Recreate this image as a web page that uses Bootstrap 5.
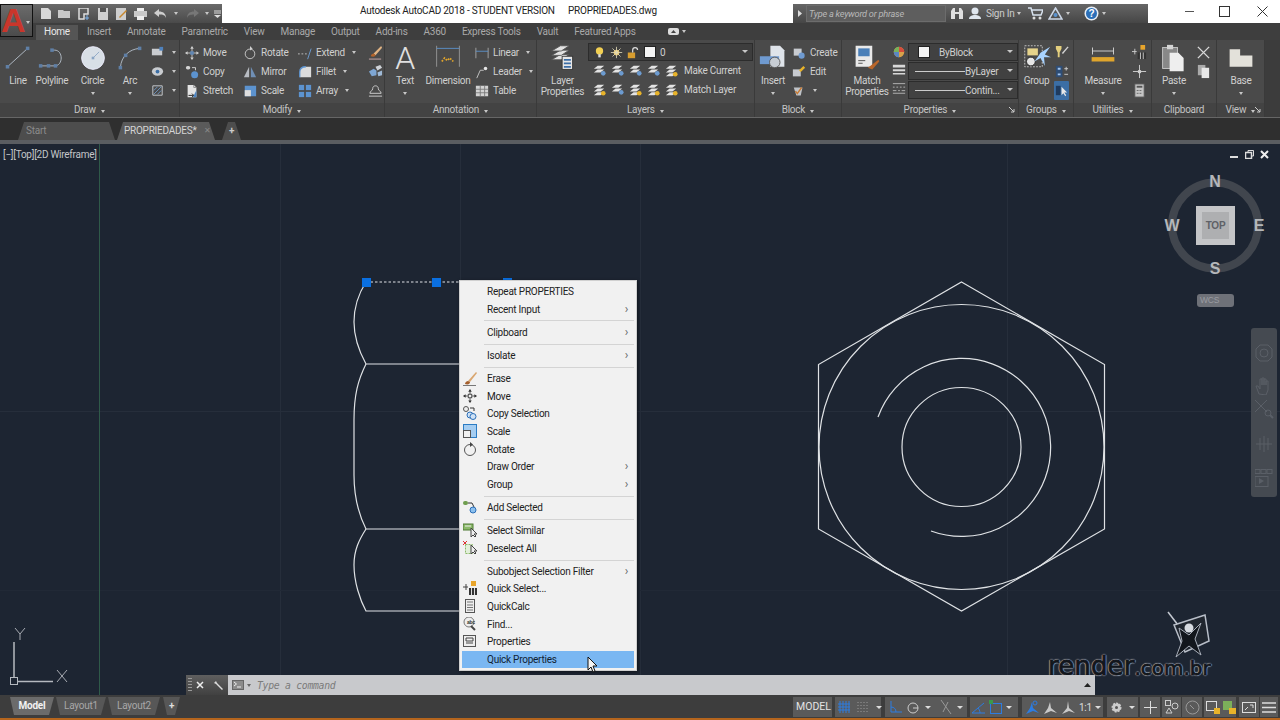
<!DOCTYPE html>
<html lang="en">
<head>
<meta charset="UTF-8" />
<title>Autodesk AutoCAD 2018 - STUDENT VERSION</title>
<link href="https://cdn.jsdelivr.net/npm/bootstrap@5.3.3/dist/css/bootstrap.min.css" rel="stylesheet" />
<style>
  html, body { height: 720px; overflow: hidden; }
  body { font-family: Roboto, "Liberation Sans", sans-serif; font-size: 10px; letter-spacing: -.25px; color: #d0d0d0; background: #1d2532; }
  svg { display: block; flex: none; }
  .app-shell { width: 1280px; height: 720px; }
  .sprite-defs { position: absolute; }

  /* widths used by panels and columns */
  .wpx-17 { width: 17px; } .wpx-30 { width: 30px; } .wpx-32 { width: 32px; } .wpx-35 { width: 35px; } .wpx-36 { width: 36px; }
  .wpx-38 { width: 38px; } .wpx-40 { width: 40px; } .wpx-43 { width: 43px; } .wpx-44 { width: 44px; }
  .wpx-46 { width: 46px; } .wpx-48 { width: 48px; } .wpx-50 { width: 50px; } .wpx-51 { width: 51px; } .wpx-52 { width: 52px; }
  .wpx-55 { width: 55px; } .wpx-58 { width: 58px; } .wpx-65 { width: 65px; } .wpx-66 { width: 66px; } .wpx-78 { width: 78px; }
  .wpx-87 { width: 87px; } .wpx-110 { width: 110px; } .wpx-152 { width: 152px; }
  .wpx-165 { width: 165px; } .wpx-177 { width: 177px; } .wpx-180 { width: 180px; } .wpx-205 { width: 205px; } .wpx-218 { width: 218px; }

  /* title bar */
  .title-row { height: 23px; background: #fff; }
  .qat { margin-left: 33px; margin-top: 4px; padding-left: 3.5px; width: 189px; height: 19px; background: linear-gradient(#6a6a6a, #4a4a4a); flex: none; }
  .qat-slot { width: 19px; display: flex; justify-content: center; align-items: center; }
  .qat-mini { width: 10px; display: flex; justify-content: center; align-items: center; }
  .qat-wide { width: 14px; }
  .app-btn { position: absolute; left: 0; top: 4px; width: 33px; height: 33px; background: linear-gradient(#6b6b6b, #4b4b4b); border: 1px solid #111; z-index: 3; }
  .app-a { font: bold 34px/31px "Liberation Sans", sans-serif; color: #c9362b; display: block; width: 24px; text-align: center; }
  .app-caret { position: absolute; right: 2px; top: 16px; }
  .doc-title { width: 571px; flex: none; padding-left: 138px; color: #222; white-space: pre; line-height: 22px; }
  .search-zone { margin-top: 4px; width: 355px; height: 19px; flex: none; background: linear-gradient(#666, #464646); color: #ccc; white-space: nowrap; }
  .search-arrow { width: 13px; height: 19px; flex: none; }
  .search-box { width: 140px; height: 17px; flex: none; background: #5e5e5e; border: 1px solid #6c6c6c; font-style: italic; color: #b8b8b8; font-size: 9.2px; padding-left: 2px; line-height: 15px; }
  .gap-signin { margin-left: 40px; } .gap-cart { margin-left: 7px; } .gap-tri { margin-left: 5px; } .gap-help { margin-left: 14px; }
  .win-btns { width: 132px; flex: none; padding-left: 36px; gap: 24px; }
  .win-x { margin-left: 3px; }

  /* ribbon tabs */
  .tab-row { height: 17px; background: #3e3e3e; padding-left: 36px; }
  .rb-tab { padding: 0 8px; line-height: 17px; color: #a9a9a9; }
  .rb-tab.is-on { background: #555; color: #e8e8e8; margin-top: 2px; margin-right: 1px; line-height: 14px; height: 15px; }

  /* ribbon panels */
  .rb-row { height: 78px; background: #3c3c3c; border-bottom: 1px solid #666; }
  .rb-panel { border-right: 1px solid #3a3a3a; background: #4a4a4a; flex: none; }
  .rb-body { height: 63px; padding-top: 2px; }
  .rb-name { height: 14px; line-height: 14px; background: #434343; text-align: center; position: relative; color: #c4c4c4; }
  .rb-big { flex: none; text-align: center; line-height: 11px; white-space: nowrap; height: 60px; }
  .rb-big svg { margin: 0 auto; }
  .big-ico { height: 32px; display: flex; align-items: center; margin-bottom: 1px; }
  .big-a { font-size: 32px; font-weight: 300; line-height: 28px; height: 28px; color: #e0e0e0; }
  .rb-col { flex: none; display: flex; flex-direction: column; padding-top: 1px; }
  .rb-it { height: 19px; display: flex; align-items: center; gap: 4px; white-space: nowrap; }
  .dd-caret { display: inline-block; border: 2.5px solid transparent; border-top: 3px solid #c8c8c8; border-bottom: 0; margin-left: 3px; flex: none; }
  .dd-caret.is-plain { margin: 0; }
  .launch { position: absolute; right: 3px; top: 4px; }
  .pad-draw { padding-left: 3px; } .pad-modify { padding-left: 5px; }
  .combo { height: 18px; background: #3d3d3d; border: 1px solid #2c2c2c; display: flex; align-items: center; position: relative; margin-top: 1px; }
  .combo .dd-caret { position: absolute; right: 4px; top: 6px; border-width: 3px 3px 0; }
  .combo-it { margin: 0 0 1px; background: #414141; }
  .combo-it:first-child { margin-top: 1px; }
  .swatch { width: 12px; height: 12px; background: #f4f4f4; border: 1px solid #222; }
  .swatch-gap { margin-left: 9px; margin-right: 9px; }
  .ltype-line { display: block; width: 50px; border-top: 1px solid #ccc; margin-left: 6px; }
  .lay-row { padding-left: 4px; gap: 3px; }
  .lay-row:first-of-type { margin-top: 1px; }
  .lay-text { margin-left: 2px; }
  .col-props { width: 16px; gap: 4px; padding-top: 3px; }
  .col-block { padding-left: 1px; }
  .on-blue { background: #3b6ea5; border-radius: 1px; }

  /* file tabs */
  .file-row { height: 22px; background: #2f2f2f; padding: 4px 0 0 18px; gap: 2px; }
  .file-tab { height: 18px; line-height: 17px; clip-path: polygon(6px 0, calc(100% - 6px) 0, 100% 100%, 0 100%); background: #4d4d4d; color: #8b8b8b; white-space: nowrap; }
  .file-tab.is-on { background: #5a5a5a; color: #d4d4d4; }
  .ft-start { width: 97px; padding-left: 8px; }
  .ft-doc { width: 98px; padding-left: 7px; }
  .ft-x { margin-left: 8px; color: #888; font-size: 8px; }
  .ft-add { width: 19px; margin-left: 5px; text-align: center; color: #ccc; font-weight: 700; }
  .divider-band { height: 4px; background: #5a5d61; }

  /* drawing area */
  .draw-area { height: 551px; background: #1d2532; position: relative; overflow: hidden; }
  .draw-svg { position: absolute; left: 0; top: -144px; }
  .vp-label { position: absolute; left: 3px; top: 3px; color: #c4c6c9; }
  .vp-btns { position: absolute; left: 1230px; top: 6px; gap: 6px; }
  .cube-top { position: absolute; left: 1196px; top: 62px; width: 39px; height: 39px; background: #aeafb1; box-shadow: inset 0 0 0 6px #c4c5c7; color: #5e6167; font: bold 10px/39px "Liberation Sans", sans-serif; text-align: center; }
  .cube-dir { position: absolute; width: 20px; text-align: center; font: bold 16px/18px "Liberation Sans", sans-serif; color: #b5b7ba; }
  .dir-n { left: 1205px; top: 29px; } .dir-s { left: 1205px; top: 116px; } .dir-e { left: 1249px; top: 73px; } .dir-w { left: 1162px; top: 73px; }
  .wcs-tag { position: absolute; left: 1197px; top: 150px; width: 37px; height: 13px; background: #6e7178; border-radius: 3px; color: #9a9ca2; font: 8.5px/13px "Liberation Sans", sans-serif; padding-left: 3px; }
  .nav-strip { position: absolute; left: 1251px; top: 184px; width: 26px; height: 169px; background: #454a51; border-radius: 3px; }
  .nav-gap { margin-top: 15px; }

  /* context menu */
  .ctx-menu { position: absolute !important; left: 459px; top: 136px; width: 178px; height: 391px; margin: 0; padding: 2px; border: 1px solid #d0d0d0; border-radius: 0; background: #f1f1f1; display: block; font-size: 10px; z-index: 4; box-shadow: 1px 1px 3px rgba(0,0,0,.5); min-width: 0; }
  .ctx-item { height: 17.6px; padding: 0 0 0 25px; line-height: 17px; color: #222; position: relative; font-size: 10px; }
  .ctx-item:hover { background: transparent; }
  .ctx-item.is-hot, .ctx-item.is-hot:hover { background: #7ab7f2; color: #123; }
  .ctx-sep { margin: 2.3px 0 2.3px 22px; border-top: 1px solid #d4d4d4; opacity: 1; height: 0; }
  .ctx-ico { position: absolute; left: 1px; top: 1px; }
  .ctx-more { position: absolute; right: 6px; top: 0; color: #666; font-size: 12px; line-height: 16px; }
  .ptr { position: absolute; left: 587px; top: 512px; z-index: 5; }

  /* command line */
  .cmd-line { position: absolute; left: 186px; top: 531px; width: 909px; height: 20px; background: #c8c9cc; z-index: 2; }
  .cmd-tools { width: 42px; flex: none; background: linear-gradient(#5f5f5f, #414141); gap: 4px; padding-left: 2px; }
  .cmd-grip { width: 4px; height: 14px; background: repeating-linear-gradient(#999 0 1px, transparent 1px 3px); }
  .cmd-wrench { margin-left: 5px; }
  .cmd-hint { font: italic 9.8px "DejaVu Sans Mono", monospace; letter-spacing: -.3px; color: #7b7b7b; padding-left: 6px; }
  .cmd-caret { border-top-color: #666; }
  .watermark { position: absolute; left: 1048px; top: 509px; color: #12161c; font: 26.2px/27px "DejaVu Sans", sans-serif; letter-spacing: 0; -webkit-text-stroke: .8px #12161c; text-shadow: 1px 0 1px #a4abb7, -1px 0 1px #a4abb7, 0 1px 1px #a4abb7, 0 -1px 1px #a4abb7; white-space: nowrap; }
  .watermark span { font-size: 20px; letter-spacing: 0; }

  /* status bar */
  .status-row { height: 23px; background: #3d3d3d; position: relative; }
  .lay-tabs { padding: 2px 0 0 10px; gap: 2px; width: 793px; flex: none; }
  .lay-tab { height: 18px; line-height: 17px; text-align: center; background: #575757; color: #a8a8a8; clip-path: polygon(0 0, 100% 0, calc(100% - 5px) 100%, 4px 100%); }
  .lay-tab.is-on { background: #6b6b6b; color: #f2f2f2; font-weight: 700; }
  .lay-add { color: #ddd; font-weight: 700; margin-left: 1px; }
  .stat-seg { height: 20px; margin-top: 2px; margin-right: 3px; background: #5a5a5a; display: flex; align-items: center; flex: none; color: #ddd; }
  .stat-seg .dd-caret { margin: 0; border-top-color: #ddd; border-width: 3px 3px 0; }
  .seg-model { width: 39px; font-size: 10.5px; letter-spacing: 0; color: #e4e4e4; padding-left: 3px; }
  .seg-grid { width: 46px; margin-right: 4px; padding-left: 3px; gap: 7px; }
  .seg-ortho { width: 82px; padding-left: 5px; gap: 5px; }
  .seg-ortho .osnap { margin-left: 4px; }
  .seg-angle { width: 48px; margin-right: 4px; padding-left: 2px; gap: 3px; }
  .seg-anno { width: 81px; margin-right: 4px; padding-left: 3px; gap: 3px; }
  .seg-gear { width: 31px; margin-right: 2px; padding-left: 3px; gap: 6px; }
  .seg-plus { width: 20px; margin-right: 2px; padding-left: 4px; }
  .seg-iso { width: 19px; margin-right: 1px; padding-left: 3px; }
  .seg-clock { width: 20px; margin-right: 2px; padding-left: 3px; }
  .seg-lock { width: 32px; padding-left: 2px; gap: 2px; }
  .seg-full { width: 20px; margin-right: 1px; padding-left: 3px; }
  .seg-menu { width: 18px; margin-right: 0; padding-left: 2px; }
  .orange-line { height: 2px; background: #b5651d; }
</style>
</head>
<body>

<svg class="sprite-defs" width="0" height="0">
  <defs>
    <symbol id="i-line" viewBox="0 0 32 32"><path d="M4 26 27 5" stroke="#b9c4cf" fill="none"/><rect x="2" y="24" width="4" height="4" fill="#5f7fa6"/><rect x="25" y="3" width="4" height="4" fill="#5f7fa6"/></symbol>
    <symbol id="i-poly" viewBox="0 0 32 32"><path d="M3 25H19C29 25 29 7 19 7H16" stroke="#b9c4cf" fill="none"/><g fill="#5f7fa6"><rect x="1" y="23" width="4" height="4"/><rect x="10" y="23" width="4" height="4"/><rect x="18" y="23" width="4" height="4"/><rect x="14" y="5" width="4" height="4"/></g></symbol>
    <symbol id="i-circle" viewBox="0 0 32 32"><circle cx="16" cy="16" r="13" fill="#d8dfe6" stroke="#eef" /><path d="M16 16 23 9" stroke="#8aa5c4"/><rect x="14.500" y="14.500" width="3" height="3" fill="#8aa5c4"/></symbol>
    <symbol id="i-arc" viewBox="0 0 32 32"><path d="M5 27C6 14 15 6 27 5" stroke="#b9c4cf" fill="none"/><g fill="#5f7fa6"><rect x="3" y="25" width="4" height="4"/><rect x="9" y="11" width="4" height="4"/><rect x="25" y="3" width="4" height="4"/></g></symbol>
    <symbol id="i-rect" viewBox="0 0 16 16"><rect x="2" y="4" width="11" height="7" fill="#c9ccd0"/><rect x="10" y="2" width="4" height="4" fill="#4f82bd"/></symbol>
    <symbol id="i-hatch" viewBox="0 0 16 16"><ellipse cx="8" cy="8" rx="6" ry="4.500" fill="#c9ccd0"/><circle cx="8" cy="8" r="2" fill="#3b6ea5"/></symbol>
    <symbol id="i-region" viewBox="0 0 16 16"><path d="M3 3h10v10H3z" fill="none" stroke="#c9ccd0"/><path d="M4 12l8-8M4 8l4-4M8 12l4-4" stroke="#6f93bd"/></symbol>
    <symbol id="i-move" viewBox="0 0 16 16"><path d="M8 1v14M1 8h14" stroke="#d0d0d0"/><path d="M8 0l2 3H6zM8 16l-2-3h4zM0 8l3-2v4zM16 8l-3 2V6z" fill="#d0d0d0"/><rect x="6" y="6" width="4" height="4" fill="#5f86b5"/></symbol>
    <symbol id="i-copy" viewBox="0 0 16 16"><rect x="1" y="1" width="5" height="4" rx="2" fill="#d4d4d4"/><circle cx="11" cy="11" r="4" fill="#5c93cf"/><path d="M8 3h4v3" stroke="#ddd" fill="none"/></symbol>
    <symbol id="i-stretch" viewBox="0 0 16 16"><path d="M3 1h7l3 3v11H3z" fill="#e4e4e4"/><path d="M10 1v3h3" fill="none" stroke="#888"/><path d="M4 13h6M8 11l2 2-2 2" stroke="#111" fill="none"/><path d="M13 7v8H9z" fill="#4d86c4"/></symbol>
    <symbol id="i-rotate" viewBox="0 0 16 16"><circle cx="8" cy="9" r="5.500" fill="none" stroke="#d0d0d0"/><path d="M8 0l3 3-3 2z" fill="#d0d0d0"/></symbol>
    <symbol id="i-mirror" viewBox="0 0 16 16"><path d="M7 2v12H1z" fill="#b8bcc2"/><path d="M9 2v12h6z" fill="#6f8fb5"/></symbol>
    <symbol id="i-scale" viewBox="0 0 16 16"><rect x="2" y="2" width="13" height="12" fill="#5c93cf"/><rect x="2" y="7" width="7" height="7" fill="#dedede"/></symbol>
    <symbol id="i-extend" viewBox="0 0 16 16"><path d="M0 9h2M4 9h2M8 9h2" stroke="#c9c9c9"/><path d="M11 15 15 3" stroke="#6fa1da"/></symbol>
    <symbol id="i-fillet" viewBox="0 0 16 16"><path d="M2 14V8C2 4 5 2 9 2h6v12z" fill="#dcdcdc"/><path d="M2 14V8C2 4 5 2 9 2" stroke="#5c93cf" fill="none" stroke-width="1.500"/></symbol>
    <symbol id="i-array" viewBox="0 0 16 16"><g fill="#5c93cf"><rect x="1" y="1" width="6" height="6"/><rect x="9" y="1" width="6" height="6"/><rect x="1" y="9" width="6" height="6"/><rect x="9" y="9" width="6" height="6"/></g></symbol>
    <symbol id="i-erase" viewBox="0 0 16 16"><path d="M6 9 14 1l1 2-7 8z" fill="#e0b383"/><path d="M3 12c0-2 2-3 3-3l2 2c0 1-2 2-5 1z" fill="#b5642b"/><path d="M1 15h13" stroke="#caa" /></symbol>
    <symbol id="i-explode" viewBox="0 0 16 16"><path d="M1 8l5-3 3 2v5l-5 1z" fill="#7ea6d3"/><path d="M8 3l5-2 2 3-5 3z" fill="#cfd3d8"/><path d="M10 9l5-2v5l-4 1z" fill="#9fb9d6"/></symbol>
    <symbol id="i-offset" viewBox="0 0 16 16"><path d="M2 11c0-3 3-2 3-5 0-4 6-4 6 0 0 3 3 2 3 5z" fill="none" stroke="#cfcfcf"/><path d="M1 14h14" stroke="#cfcfcf"/></symbol>
    <symbol id="i-dim" viewBox="0 0 32 32"><path d="M3 2v24M29 2v24" stroke="#9a9a9a"/><path d="M3 5h26" stroke="#5c93cf"/><path d="M9 20l3-4 3 3 3-3 4 4" stroke="#e0a52c" fill="none" stroke-width="2" stroke-dasharray="2 1.500"/></symbol>
    <symbol id="i-linear" viewBox="0 0 16 16"><path d="M1 2v12M15 2v12" stroke="#aaa"/><path d="M1 6h14" stroke="#5c93cf"/></symbol>
    <symbol id="i-leader" viewBox="0 0 16 16"><path d="M2 15 6 6h4" stroke="#cfcfcf" fill="none"/><circle cx="12" cy="4" r="2" fill="#e6e6e6"/></symbol>
    <symbol id="i-table" viewBox="0 0 16 16"><rect x="1" y="2" width="14" height="12" fill="#d2d2d2"/><path d="M1 6h14M1 10h14M6 2v12M11 2v12" stroke="#777"/></symbol>
    <symbol id="i-layers" viewBox="0 0 32 32"><g fill="#e3e3e3" stroke="#555"><path d="M3 18 13 12h10L14 18z"/><path d="M3 13 13 7h10L14 13z"/><path d="M3 8 13 2h10L14 8z"/></g><rect x="15" y="14" width="12" height="15" fill="#e7e7e7" stroke="#333"/><path d="M17 18h8M17 22h8M17 26h8" stroke="#3c6ea6" stroke-width="2"/></symbol>
    <symbol id="i-lay" viewBox="0 0 16 16"><path d="M2 6l4-3h7l-4 3zM2 10l4-3h7l-4 3z" fill="#e4e4e4"/><circle cx="12" cy="11" r="2.500" fill="#6c9bd0"/></symbol>
    <symbol id="i-lay2" viewBox="0 0 16 16"><path d="M2 6l4-3h7l-4 3zM2 10l4-3h7l-4 3zM2 14l4-3h7l-4 3z" fill="#e4e4e4"/><circle cx="12" cy="12" r="2.500" fill="#e8b32a"/></symbol>
    <symbol id="i-bulb" viewBox="0 0 16 16"><circle cx="8" cy="6" r="4.500" fill="#f1cf52"/><rect x="6.500" y="10" width="3" height="4" fill="#ddd"/></symbol>
    <symbol id="i-sun" viewBox="0 0 16 16"><circle cx="8" cy="8" r="3.500" fill="#ecc868"/><path d="M8 1v14M1 8h14M3 3l10 10M13 3 3 13" stroke="#e0d9b8"/></symbol>
    <symbol id="i-lock" viewBox="0 0 16 16"><rect x="1" y="8" width="9" height="7" fill="#d79d2f"/><path d="M7 8V5a3 3 0 0 1 6 0" fill="none" stroke="#ddd" stroke-width="1.500"/></symbol>
    <symbol id="i-insert" viewBox="0 0 32 32"><path d="M13 2h11l5 5v19H13z" fill="#dfe4ea"/><path d="M1 14h22v9H1z" fill="#6f9ad0"/><circle cx="18" cy="21" r="6" fill="#c7cdd4" stroke="#555"/></symbol>
    <symbol id="i-create" viewBox="0 0 16 16"><rect x="2" y="3" width="9" height="8" fill="#c8cbd0"/><circle cx="11" cy="11" r="3.500" fill="#6f9ad0"/></symbol>
    <symbol id="i-edit" viewBox="0 0 16 16"><rect x="1" y="5" width="9" height="8" fill="#c8cbd0"/><path d="M8 6l5-5 2 2-5 5z" fill="#e8b32a"/></symbol>
    <symbol id="i-check" viewBox="0 0 16 16"><path d="M2 4h10l-2 9H5z" fill="#bfc3c8"/><path d="M4 8l2 3 5-7" stroke="#c8782e" fill="none" stroke-width="1.500"/></symbol>
    <symbol id="i-match" viewBox="0 0 32 32"><rect x="3" y="2" width="19" height="24" fill="#e9e9e9"/><rect x="6" y="5" width="13" height="9" fill="#4a7fb8"/><path d="M6 19h8M6 22h5" stroke="#444"/><path d="M17 27 29 18l1 2-8 9z" fill="#b9662a"/></symbol>
    <symbol id="i-wheel" viewBox="0 0 16 16"><circle cx="8" cy="8" r="6" fill="#d8a24a"/><path d="M8 8V2a6 6 0 0 1 6 6z" fill="#d64c3c"/><path d="M8 8H2a6 6 0 0 1 6-6z" fill="#79b15b"/><path d="M8 8v6a6 6 0 0 1-6-6z" fill="#5b86c2"/></symbol>
    <symbol id="i-weights" viewBox="0 0 16 16"><path d="M1 2h14v3H1zM1 7h14v2.500H1zM1 11.500h14V13H1z" fill="#d8d8d8"/></symbol>
    <symbol id="i-ltype" viewBox="0 0 16 16"><path d="M1 3h14M1 7h2M5 7h2M9 7h2M13 7h2M1 11h4M7 11h2M11 11h4M1 14h14" stroke="#bdbdbd"/></symbol>
    <symbol id="i-group" viewBox="0 0 32 32"><rect x="2" y="2" width="20" height="24" fill="none" stroke="#cfcfcf" stroke-dasharray="2 1.500"/><rect x="5" y="5" width="12" height="8" fill="#e5d38b"/><circle cx="9" cy="20" r="5" fill="#e6e6e6" stroke="#222"/><path d="M20 10 31 3 25 12 32 15 24 15 25 25 20 16 13 20 18 13z" fill="#a9d3ff"/></symbol>
    <symbol id="i-brush" viewBox="0 0 16 16"><path d="M2 1h6v3L6 8v5H4V8L2 4z" fill="#e4cf7e"/><path d="M9 9 15 2" stroke="#d3d3d3" stroke-width="1.500"/></symbol>
    <symbol id="i-plusm" viewBox="0 0 16 16"><rect x="2" y="2" width="7" height="12" fill="#2e4d75"/><path d="M4 5h3M4 11h3" stroke="#9fc3ee" stroke-width="2"/><path d="M11 5h4M13 3v4M11 11h4" stroke="#ccc"/></symbol>
    <symbol id="i-cursor" viewBox="0 0 16 16"><rect x="2" y="3" width="5" height="10" fill="#1f3b5f"/><path d="M8 4v9l2-2 2 3 1-1-2-3h3z" fill="#e8e8e8"/></symbol>
    <symbol id="i-measure" viewBox="0 0 32 32"><path d="M4 4v8M28 4v8" stroke="#ddd"/><path d="M4 8h24" stroke="#ddd"/><rect x="3" y="15" width="26" height="5" fill="#e0a52c"/></symbol>
    <symbol id="i-qsel" viewBox="0 0 16 16"><path d="M0 7h5M3 4v6" stroke="#ccc"/><rect x="9" y="0" width="5" height="5" fill="#e8a52c"/><rect x="6" y="8" width="9" height="7" fill="#333"/><path d="M9 8v7M12 8v7" stroke="#ccc"/></symbol>
    <symbol id="i-point" viewBox="0 0 16 16"><path d="M8 1v14M1 8h14" stroke="#cfcfcf"/><circle cx="8" cy="8" r="2" fill="#cfcfcf"/></symbol>
    <symbol id="i-calc" viewBox="0 0 16 16"><rect x="3" y="1" width="10" height="14" fill="#c4c4c4" stroke="#555"/><rect x="5" y="3" width="6" height="2" fill="#555"/><path d="M5 8h6M5 11h6" stroke="#666" stroke-dasharray="2 1"/></symbol>
    <symbol id="i-paste" viewBox="0 0 32 32"><rect x="3" y="4" width="17" height="24" fill="#888" stroke="#ccc"/><rect x="8" y="1" width="7" height="5" fill="#d5d5d5"/><path d="M11 10h10l6 6v15H11z" fill="#eee"/></symbol>
    <symbol id="i-cut" viewBox="0 0 16 16"><path d="M2 2 14 14M14 2 2 14" stroke="#d8d8d8" stroke-width="1.500"/></symbol>
    <symbol id="i-docs" viewBox="0 0 16 16"><rect x="2" y="1" width="8" height="11" fill="#aaa"/><rect x="6" y="4" width="8" height="11" fill="#e8e8e8"/></symbol>
    <symbol id="i-base" viewBox="0 0 32 32"><path d="M3 6h12v7h14v13H3z" fill="#e3e1da"/></symbol>
  </defs>
</svg>

<div class="app-shell d-flex flex-column position-relative">

  <!-- title bar -->
  <div class="title-row d-flex">
    <div class="qat d-flex align-items-center">
      <span class="qat-slot"><svg width="12" height="11"><path d="M1 0h7l3 3v8H1z" fill="#d8d8d8"/></svg></span>
      <span class="qat-slot"><svg width="13" height="11"><path d="M0 2h5l1 1h6v7H0z" fill="#c9c9c9"/></svg></span>
      <span class="qat-slot"><svg width="12" height="12"><path d="M1 0h9v6H6v5H1z" fill="none" stroke="#ddd" stroke-width="1.500"/><path d="M9 7v5M7 10h4" stroke="#7cb0e8"/></svg></span>
      <span class="qat-slot"><svg width="12" height="12"><rect x="1" width="10" height="12" fill="#cfcfcf"/><rect x="3" width="6" height="4" fill="#555"/></svg></span>
      <span class="qat-slot"><svg width="13" height="12"><rect x="1" width="10" height="12" fill="#cfcfcf"/><path d="M4 9 11 2l1 1-7 7z" fill="#c8872c"/></svg></span>
      <span class="qat-slot"><svg width="13" height="12"><rect x="3" width="7" height="3" fill="#eee"/><rect y="3" width="13" height="6" fill="#c9c9c9"/><rect x="3" y="8" width="7" height="4" fill="#eee"/></svg></span>
      <span class="qat-slot"><svg width="12" height="10"><path d="M0 4 5 0v2.500c4 0 7 2 7 6.500-1-3-3-3.500-7-3.500V8z" fill="#cfcfcf"/></svg></span>
      <span class="qat-mini qat-wide"><span class="dd-caret is-plain"></span></span>
      <span class="qat-slot"><svg width="12" height="10"><path d="M12 4 7 0v2.500C3 2.500 0 4.500 0 9c1-3 3-3.500 7-3.500V8z" fill="#777"/></svg></span>
      <span class="qat-mini"><span class="dd-caret is-plain"></span></span>
      <span class="qat-mini"><svg width="7" height="8"><path d="M0 1h7M0 3h7" stroke="#ddd"/><path d="M0 5h7L3.500 8z" fill="#ddd"/></svg></span>
    </div>
    <div class="app-btn"><span class="app-a">A</span><span class="dd-caret app-caret"></span></div>
    <div class="doc-title">Autodesk AutoCAD 2018 - STUDENT VERSION      PROPRIEDADES.dwg</div>
    <div class="search-zone d-flex align-items-center">
      <div class="search-arrow d-flex align-items-center justify-content-center"><svg width="4" height="7"><path d="M0 0l4 3.500L0 7z" fill="#ddd"/></svg></div>
      <div class="search-box">Type a keyword or phrase</div>
      <svg class="ms-1" width="14" height="13" viewBox="0 0 14 13"><path d="M1 4 3 1h2v4h4V1h2l2 3v8H9V7H5v5H1z" fill="#dfdfdf"/></svg>
      <svg class="ms-1" width="14" height="13" viewBox="0 0 14 13"><circle cx="7" cy="4" r="3.500" fill="#dfe6ee"/><path d="M1 12c0-3 3-4 6-4s6 1 6 4z" fill="#dfe6ee"/></svg>
      <span class="ms-1">Sign In</span>
      <span class="dd-caret gap-signin"></span>
      <svg class="gap-cart" width="15" height="13" viewBox="0 0 15 13"><path d="M0 1h3l2 7h8l2-5H4" fill="none" stroke="#d8e2ee" stroke-width="1.500"/><circle cx="6" cy="11" r="1.500" fill="#ddd"/><circle cx="12" cy="11" r="1.500" fill="#ddd"/></svg>
      <svg class="gap-tri" width="15" height="13" viewBox="0 0 15 13"><path d="M7.500 1 14 12H1z" fill="none" stroke="#cdd8e8" stroke-width="1.500"/><circle cx="7.500" cy="8" r="2" fill="#5c93cf"/></svg>
      <span class="dd-caret"></span>
      <svg class="gap-help" width="15" height="15" viewBox="0 0 15 15"><circle cx="7.500" cy="7.500" r="7" fill="#e8eef5"/><circle cx="7.500" cy="7.500" r="5.500" fill="#2b6fb8"/><text x="7.500" y="11" text-anchor="middle" font-family="Liberation Sans" font-weight="bold" font-size="10" fill="#fff">?</text></svg>
      <span class="dd-caret"></span>
    </div>
    <div class="win-btns d-flex align-items-center">
      <svg width="11" height="11"><path d="M1 5.500h9" stroke="#555"/></svg>
      <svg width="11" height="11"><rect x=".5" y=".5" width="10" height="10" fill="none" stroke="#333"/></svg>
      <svg class="win-x" width="11" height="11"><path d="M.5.500l10 10M10.500.500l-10 10" stroke="#333"/></svg>
    </div>
  </div>

  <!-- ribbon tabs -->
  <div class="tab-row d-flex">
    <span class="rb-tab is-on">Home</span><span class="rb-tab">Insert</span><span class="rb-tab">Annotate</span><span class="rb-tab">Parametric</span><span class="rb-tab">View</span><span class="rb-tab">Manage</span><span class="rb-tab">Output</span><span class="rb-tab">Add-ins</span><span class="rb-tab">A360</span><span class="rb-tab">Express Tools</span><span class="rb-tab">Vault</span><span class="rb-tab">Featured Apps</span>
    <span class="rb-tab d-flex align-items-center"><svg class="ms-3" width="11" height="7"><rect width="11" height="7" rx="2" fill="#ddd"/><path d="M3 5l2.500-3L8 5z" fill="#444"/></svg><span class="dd-caret"></span></span>
  </div>

  <!-- ribbon -->
  <div class="rb-row d-flex">

    <div class="rb-panel wpx-180">
      <div class="rb-body d-flex pad-draw">
        <div class="rb-big wpx-30"><div class="big-ico"><svg width="28" height="28"><use href="#i-line"/></svg></div>Line</div>
        <div class="rb-big wpx-38"><div class="big-ico"><svg width="28" height="28"><use href="#i-poly"/></svg></div>Polyline</div>
        <div class="rb-big wpx-43"><div class="big-ico"><svg width="28" height="28"><use href="#i-circle"/></svg></div>Circle<br><span class="dd-caret is-plain"></span></div>
        <div class="rb-big wpx-32"><div class="big-ico"><svg width="28" height="28"><use href="#i-arc"/></svg></div>Arc<br><span class="dd-caret is-plain"></span></div>
        <div class="rb-col ms-1">
          <div class="rb-it"><svg width="15" height="15"><use href="#i-rect"/></svg><span class="dd-caret"></span></div>
          <div class="rb-it"><svg width="15" height="15"><use href="#i-hatch"/></svg><span class="dd-caret"></span></div>
          <div class="rb-it"><svg width="15" height="15"><use href="#i-region"/></svg><span class="dd-caret"></span></div>
        </div>
      </div>
      <div class="rb-name">Draw <span class="dd-caret"></span></div>
    </div>

    <div class="rb-panel wpx-205">
      <div class="rb-body d-flex pad-modify">
        <div class="rb-col wpx-58">
          <div class="rb-it"><svg width="14" height="14"><use href="#i-move"/></svg>Move</div>
          <div class="rb-it"><svg width="14" height="14"><use href="#i-copy"/></svg>Copy</div>
          <div class="rb-it"><svg width="14" height="14"><use href="#i-stretch"/></svg>Stretch</div>
        </div>
        <div class="rb-col wpx-55">
          <div class="rb-it"><svg width="14" height="14"><use href="#i-rotate"/></svg>Rotate</div>
          <div class="rb-it"><svg width="14" height="14"><use href="#i-mirror"/></svg>Mirror</div>
          <div class="rb-it"><svg width="14" height="14"><use href="#i-scale"/></svg>Scale</div>
        </div>
        <div class="rb-col wpx-66">
          <div class="rb-it"><svg width="14" height="14"><use href="#i-extend"/></svg>Extend <span class="dd-caret"></span></div>
          <div class="rb-it"><svg width="14" height="14"><use href="#i-fillet"/></svg>Fillet <span class="dd-caret"></span></div>
          <div class="rb-it"><svg width="14" height="14"><use href="#i-array"/></svg>Array <span class="dd-caret"></span></div>
        </div>
        <div class="rb-col ms-1">
          <div class="rb-it"><svg width="15" height="15"><use href="#i-erase"/></svg></div>
          <div class="rb-it"><svg width="15" height="15"><use href="#i-explode"/></svg></div>
          <div class="rb-it"><svg width="15" height="15"><use href="#i-offset"/></svg></div>
        </div>
      </div>
      <div class="rb-name">Modify <span class="dd-caret"></span></div>
    </div>

    <div class="rb-panel wpx-152">
      <div class="rb-body d-flex">
        <div class="rb-big wpx-40"><div class="big-ico justify-content-center"><span class="big-a">A</span></div>Text<br><span class="dd-caret is-plain"></span></div>
        <div class="rb-big wpx-46"><div class="big-ico"><svg width="28" height="28"><use href="#i-dim"/></svg></div>Dimension</div>
        <div class="rb-col ms-1">
          <div class="rb-it"><svg width="14" height="14"><use href="#i-linear"/></svg>Linear <span class="dd-caret"></span></div>
          <div class="rb-it"><svg width="14" height="14"><use href="#i-leader"/></svg>Leader <span class="dd-caret"></span></div>
          <div class="rb-it"><svg width="14" height="14"><use href="#i-table"/></svg>Table</div>
        </div>
      </div>
      <div class="rb-name">Annotation <span class="dd-caret"></span></div>
    </div>

    <div class="rb-panel wpx-218">
      <div class="rb-body d-flex">
        <div class="rb-big wpx-51"><div class="big-ico"><svg width="28" height="28"><use href="#i-layers"/></svg></div>Layer<br>Properties</div>
        <div class="wpx-165">
          <div class="combo">
            <svg class="ms-1" width="13" height="13"><use href="#i-bulb"/></svg>
            <svg class="ms-1" width="13" height="13"><use href="#i-sun"/></svg>
            <svg class="ms-1" width="13" height="13"><use href="#i-lock"/></svg>
            <span class="swatch ms-1"></span><span class="ms-1">0</span><span class="dd-caret"></span>
          </div>
          <div class="rb-it lay-row">
            <svg width="15" height="15"><use href="#i-lay"/></svg><svg width="15" height="15"><use href="#i-lay"/></svg><svg width="15" height="15"><use href="#i-lay"/></svg><svg width="15" height="15"><use href="#i-lay"/></svg><svg width="15" height="15"><use href="#i-lay2"/></svg><span class="lay-text">Make Current</span>
          </div>
          <div class="rb-it lay-row">
            <svg width="15" height="15"><use href="#i-lay2"/></svg><svg width="15" height="15"><use href="#i-lay"/></svg><svg width="15" height="15"><use href="#i-lay2"/></svg><svg width="15" height="15"><use href="#i-lay2"/></svg><svg width="15" height="15"><use href="#i-lay2"/></svg><span class="lay-text">Match Layer</span>
          </div>
        </div>
      </div>
      <div class="rb-name">Layers <span class="dd-caret"></span></div>
    </div>

    <div class="rb-panel wpx-87">
      <div class="rb-body d-flex">
        <div class="rb-big wpx-36"><div class="big-ico"><svg width="28" height="28"><use href="#i-insert"/></svg></div>Insert<br><span class="dd-caret is-plain"></span></div>
        <div class="rb-col col-block">
          <div class="rb-it"><svg width="14" height="14"><use href="#i-create"/></svg>Create</div>
          <div class="rb-it"><svg width="14" height="14"><use href="#i-edit"/></svg>Edit</div>
          <div class="rb-it"><svg width="14" height="14"><use href="#i-check"/></svg><span class="dd-caret"></span></div>
        </div>
      </div>
      <div class="rb-name">Block <span class="dd-caret"></span></div>
    </div>

    <div class="rb-panel wpx-177">
      <div class="rb-body d-flex">
        <div class="rb-big wpx-50"><div class="big-ico"><svg width="28" height="28"><use href="#i-match"/></svg></div>Match<br>Properties</div>
        <div class="rb-col col-props">
          <svg width="14" height="14"><use href="#i-wheel"/></svg><svg width="14" height="14"><use href="#i-weights"/></svg><svg width="14" height="14"><use href="#i-ltype"/></svg>
        </div>
        <div class="wpx-110">
          <div class="combo combo-it"><span class="swatch swatch-gap"></span><span>ByBlock</span><span class="dd-caret"></span></div>
          <div class="combo combo-it"><span class="ltype-line"></span><span>ByLayer</span><span class="dd-caret"></span></div>
          <div class="combo combo-it"><span class="ltype-line"></span><span>Contin...</span><span class="dd-caret"></span></div>
        </div>
      </div>
      <div class="rb-name">Properties <span class="dd-caret"></span>
        <svg class="launch" width="6" height="6"><path d="M0 0l5 5M5 2v3H2" stroke="#ccc" fill="none"/></svg></div>
    </div>

    <div class="rb-panel wpx-55">
      <div class="rb-body d-flex">
        <div class="rb-big wpx-35"><div class="big-ico"><svg width="28" height="28"><use href="#i-group"/></svg></div>Group</div>
        <div class="rb-col">
          <div class="rb-it"><svg width="15" height="15"><use href="#i-brush"/></svg></div>
          <div class="rb-it"><svg width="15" height="15"><use href="#i-plusm"/></svg></div>
          <div class="rb-it on-blue"><svg width="15" height="15"><use href="#i-cursor"/></svg></div>
        </div>
      </div>
      <div class="rb-name">Groups <span class="dd-caret"></span></div>
    </div>

    <div class="rb-panel wpx-78">
      <div class="rb-body d-flex">
        <div class="rb-big wpx-58"><div class="big-ico justify-content-center"><svg width="28" height="28"><use href="#i-measure"/></svg></div>Measure<br><span class="dd-caret is-plain"></span></div>
        <div class="rb-col">
          <div class="rb-it"><svg width="15" height="15"><use href="#i-qsel"/></svg></div>
          <div class="rb-it"><svg width="15" height="15"><use href="#i-point"/></svg></div>
          <div class="rb-it"><svg width="15" height="15"><use href="#i-calc"/></svg></div>
        </div>
      </div>
      <div class="rb-name">Utilities <span class="dd-caret"></span></div>
    </div>

    <div class="rb-panel wpx-65">
      <div class="rb-body d-flex">
        <div class="rb-big wpx-44"><div class="big-ico justify-content-center"><svg width="28" height="28"><use href="#i-paste"/></svg></div>Paste<br><span class="dd-caret is-plain"></span></div>
        <div class="rb-col">
          <div class="rb-it"><svg width="15" height="15"><use href="#i-cut"/></svg></div>
          <div class="rb-it"><svg width="15" height="15"><use href="#i-docs"/></svg></div>
        </div>
      </div>
      <div class="rb-name">Clipboard</div>
    </div>

    <div class="rb-panel wpx-48">
      <div class="rb-body d-flex">
        <div class="rb-big wpx-48"><div class="big-ico justify-content-center"><svg width="28" height="28"><use href="#i-base"/></svg></div>Base<br><span class="dd-caret is-plain"></span></div>
      </div>
      <div class="rb-name">View <span class="dd-caret"></span>
        <svg class="launch" width="6" height="6"><path d="M0 0l5 5M5 2v3H2" stroke="#ccc" fill="none"/></svg></div>
    </div>
  </div>

  <!-- file tabs -->
  <div class="file-row d-flex">
    <div class="file-tab ft-start">Start</div>
    <div class="file-tab is-on ft-doc d-flex">PROPRIEDADES*<span class="ft-x">✕</span></div>
    <div class="file-tab ft-add">+</div>
  </div>
  <div class="divider-band"></div>

  <!-- drawing area -->
  <div class="draw-area">
    <svg class="draw-svg" width="1280" height="720" viewBox="0 0 1280 720" fill="none">
      <!-- grid -->
      <g stroke="#262e3b">
        <path d="M280.500 144V695M640.500 144V695M1007.500 144V695M460.500 144V280M0 411.500H1280"/>
        <path d="M0 590.500H460M640 590.500H1280" stroke="#212936"/>
      </g>
      <path d="M99.500 144V695" stroke="#2f5a49"/>
      <!-- nut, side view -->
      <g stroke="#dfe2e5" stroke-width="1.200">
        <path d="M366 282C359 293 354 306 354 322C354 340 360 353 366 364H460"/>
        <path d="M366 364C358 380 354 395 354 420V475C354 498 360 517 366 529H460"/>
        <path d="M366 529C359 540 354 550 354 565C354 582 360 600 366 611H460"/>
        <path d="M366 282H510" stroke-dasharray="2.500 2"/>
      </g>
      <g fill="#0a6fe0"><rect x="362" y="278" width="9" height="9"/><rect x="432" y="278" width="9" height="9"/><rect x="503" y="278" width="9" height="9"/></g>
      <!-- nut, front view -->
      <g stroke="#dfe2e5" stroke-width="1.200">
        <path d="M961.500 282 1104.500 364.500V529L961.500 611 818.500 529V364.500Z"/>
        <circle cx="961.500" cy="447" r="142.500"/>
        <circle cx="961.500" cy="447" r="59.500"/>
        <path d="M878 417A89 89 0 1 1 931 531"/>
      </g>
      <!-- ucs icon -->
      <g stroke="#b5b9bf">
        <path d="M14 642V677M18 681.500H53" stroke-width="1.500"/>
        <rect x="10.500" y="677.500" width="7" height="7"/>
        <path d="M15 628 20 634 25 628M20 634V640M57 670 67 682M67 670 57 682" stroke-width=".9"/>
      </g>
      <!-- viewcube ring -->
      <circle cx="1215" cy="225.500" r="43" stroke="#41464e" stroke-width="8"/>
      <!-- watermark figure -->
      <g transform="translate(1165 611)">
        <path d="M3 1 13 14" stroke="#c4c9d1" stroke-width="1.500"/>
        <path d="M9 14 40 4 44 30 20 41Z" fill="#20262f" stroke="#b8bec8" stroke-width="1.500"/>
        <circle cx="24" cy="17" r="4.500" fill="#d6dae0"/>
        <path d="M14 17 24 24 36 12 30 28 36 44 24 35 11 46 17 30Z" fill="#12161c" stroke="#a9afba"/>
      </g>
    </svg>

    <div class="vp-label">[−][Top][2D Wireframe]</div>
    <div class="vp-btns d-flex align-items-center">
      <svg width="9" height="9"><path d="M0 7h8" stroke="#ddd" stroke-width="2"/></svg>
      <svg width="9" height="9"><path d="M3 2V.500h5.500V6H7" stroke="#ddd" fill="none"/><rect x=".5" y="2.500" width="6" height="6" stroke="#ddd" stroke-width="1.500" fill="none"/></svg>
      <svg width="9" height="9"><path d="M1 1l7 7M8 1 1 8" stroke="#eee" stroke-width="2"/></svg>
    </div>

    <div class="cube-top">TOP</div>
    <span class="cube-dir dir-n">N</span>
    <span class="cube-dir dir-s">S</span>
    <span class="cube-dir dir-e">E</span>
    <span class="cube-dir dir-w">W</span>
    <div class="wcs-tag">WCS</div>

    <div class="nav-strip d-flex flex-column align-items-center">
      <svg class="mt-3" width="18" height="18" viewBox="0 0 18 18"><path d="M5 1h8l4 4v8l-4 4H5l-4-4V5z" stroke="#5a5f67" fill="none"/><circle cx="9" cy="9" r="4" stroke="#5a5f67" fill="none"/></svg>
      <svg class="nav-gap" width="18" height="18" viewBox="0 0 18 18"><path d="M4 17 1 9h2l2 3V2h2v6-7h2v7-6h2v6-4h2v9l-2 5z" stroke="#5a5f67" fill="none"/></svg>
      <svg class="mt-1" width="20" height="20" viewBox="0 0 20 20"><path d="M1 1 13 13M13 1 1 13" stroke="#5a5f67"/><circle cx="14" cy="14" r="3" stroke="#5a5f67" fill="none"/><path d="M16 16l3 3" stroke="#5a5f67" stroke-width="2"/></svg>
      <svg class="mt-3" width="18" height="18" viewBox="0 0 18 18"><path d="M9 1v16M1 9h16M5 3v12M13 3v12" stroke="#5a5f67"/></svg>
      <svg class="mt-3" width="18" height="22" viewBox="0 0 18 22"><rect y=".5" width="5" height="4" stroke="#5a5f67" fill="none"/><rect x="6" y=".5" width="5" height="4" stroke="#5a5f67" fill="none"/><rect x="12" y=".5" width="5" height="4" stroke="#5a5f67" fill="none"/><rect y="7.500" width="13" height="10" stroke="#5a5f67" fill="none"/><path d="M4 9l5 3-5 3z" fill="#5a5f67"/></svg>
    </div>

    <!-- right-click menu -->
    <ul class="ctx-menu dropdown-menu show list-unstyled">
      <li><a class="ctx-item dropdown-item">Repeat PROPERTIES</a></li>
      <li><a class="ctx-item dropdown-item">Recent Input<span class="ctx-more">›</span></a></li>
      <li><hr class="ctx-sep"></li>
      <li><a class="ctx-item dropdown-item">Clipboard<span class="ctx-more">›</span></a></li>
      <li><hr class="ctx-sep"></li>
      <li><a class="ctx-item dropdown-item">Isolate<span class="ctx-more">›</span></a></li>
      <li><hr class="ctx-sep"></li>
      <li><a class="ctx-item dropdown-item"><svg class="ctx-ico" width="15" height="15"><path d="M5 10 13 1l1 1-7 9z" fill="#d9a66f"/><path d="M2 13c0-2 2-3 3-3l2 1c0 2-2 3-5 2z" fill="#a5602e"/><path d="M0 14.500h13" stroke="#777"/></svg>Erase</a></li>
      <li><a class="ctx-item dropdown-item"><svg class="ctx-ico" width="14" height="14" viewBox="0 0 16 16"><path d="M8 1v14M1 8h14" stroke="#444"/><path d="M8 0l2 3H6zM8 16l-2-3h4zM0 8l3-2v4zM16 8l-3 2V6z" fill="#333"/><rect x="6" y="6" width="4" height="4" fill="#eee" stroke="#444"/></svg>Move</a></li>
      <li><a class="ctx-item dropdown-item"><svg class="ctx-ico" width="14" height="14"><rect x=".5" y=".5" width="5" height="5" rx="2.500" fill="#eee" stroke="#555"/><circle cx="7" cy="9" r="3" fill="#cfe2f6" stroke="#2b6fb8"/><circle cx="10" cy="10.500" r="3" fill="#cfe2f6" stroke="#2b6fb8"/><path d="M7 2h4v3" stroke="#333" fill="none"/></svg>Copy Selection</a></li>
      <li><a class="ctx-item dropdown-item"><svg class="ctx-ico" width="14" height="14"><rect x=".5" y=".5" width="13" height="13" fill="#a5cdf1" stroke="#2b7cc4"/><rect x=".5" y="6.500" width="7" height="7" fill="#f1f1f1" stroke="#555"/></svg>Scale</a></li>
      <li><a class="ctx-item dropdown-item"><svg class="ctx-ico" width="14" height="14"><circle cx="7" cy="8" r="5.500" fill="none" stroke="#555"/><path d="M7 0l3 2.500L7 5z" fill="#444"/></svg>Rotate</a></li>
      <li><a class="ctx-item dropdown-item">Draw Order<span class="ctx-more">›</span></a></li>
      <li><a class="ctx-item dropdown-item">Group<span class="ctx-more">›</span></a></li>
      <li><hr class="ctx-sep"></li>
      <li><a class="ctx-item dropdown-item"><svg class="ctx-ico" width="14" height="14"><rect y="1" width="5" height="4" rx="2" fill="#6f9e4f"/><path d="M5 3h4l2 4" stroke="#333" fill="none"/><circle cx="10" cy="10" r="3" fill="#8cc0ee" stroke="#2b6fb8"/></svg>Add Selected</a></li>
      <li><hr class="ctx-sep"></li>
      <li><a class="ctx-item dropdown-item"><svg class="ctx-ico" width="14" height="14"><rect y="1" width="10" height="6" fill="#8cba6a" stroke="#4f7a34"/><path d="M2 3h6" stroke="#eee"/><path d="M8 5v9l2-2 2 2 1-1-2-2h3z" fill="#eee" stroke="#444"/></svg>Select Similar</a></li>
      <li><a class="ctx-item dropdown-item"><svg class="ctx-ico" width="14" height="14"><path d="M0 0l4 4M4 0 0 4" stroke="#d33"/><rect x="2.500" y="3.500" width="7" height="9" fill="#e2efd9" stroke="#8cba6a" stroke-dasharray="2 1"/><path d="M8 4v9l2-2 2 2 1-1-2-2h3z" fill="#eee" stroke="#444"/></svg>Deselect All</a></li>
      <li><hr class="ctx-sep"></li>
      <li><a class="ctx-item dropdown-item">Subobject Selection Filter<span class="ctx-more">›</span></a></li>
      <li><a class="ctx-item dropdown-item"><svg class="ctx-ico" width="14" height="14"><path d="M0 6h5M3 3v6" stroke="#444"/><rect x="8" width="5" height="5" fill="#e8a52c"/><rect x="6" y="7" width="8" height="7" fill="#333"/><path d="M8.500 7v7M11.500 7v7" stroke="#ddd"/></svg>Quick Select...</a></li>
      <li><a class="ctx-item dropdown-item"><svg class="ctx-ico" width="14" height="14"><rect x="2.500" y=".5" width="9" height="13" fill="#eee" stroke="#555"/><path d="M4 3h6M4 6h6M4 8.500h6M4 11h6" stroke="#777"/></svg>QuickCalc</a></li>
      <li><a class="ctx-item dropdown-item"><svg class="ctx-ico" width="14" height="14"><circle cx="6" cy="5" r="5" fill="#eee" stroke="#777"/><text x="4" y="7" font-size="5" font-weight="700" fill="#333" font-family="Liberation Sans">abc</text><path d="M8 9l4 4" stroke="#444" stroke-width="2"/></svg>Find...</a></li>
      <li><a class="ctx-item dropdown-item"><svg class="ctx-ico" width="14" height="14"><rect x=".5" y="1.500" width="12" height="11" fill="#eee" stroke="#555"/><path d="M3 4h7v3H3zM3 9h7" stroke="#444" fill="none"/></svg>Properties</a></li>
      <li><a class="ctx-item dropdown-item is-hot">Quick Properties</a></li>
    </ul>
    <svg class="ptr" width="11" height="17"><path d="M1 1v13l3-3 2 5 2-1-2-5h4z" fill="#f4f4f4" stroke="#111"/></svg>

    <!-- command line -->
    <div class="cmd-line d-flex align-items-center">
      <div class="cmd-tools d-flex align-items-center align-self-stretch">
        <span class="cmd-grip"></span>
        <svg width="8" height="8"><path d="M1 1l6 6M7 1 1 7" stroke="#eee" stroke-width="1.500"/></svg>
        <svg class="cmd-wrench" width="11" height="11"><path d="M1 3 3 1l1 2 6 6-1 1-6-6z" fill="#ddd"/></svg>
      </div>
      <svg class="ms-1" width="12" height="10"><rect x=".5" y=".5" width="11" height="9" fill="#8b8b8b" stroke="#666"/><path d="M2 2l2.500 2L2 6M5 7h4" stroke="#eee" fill="none"/></svg>
      <span class="dd-caret cmd-caret"></span>
      <span class="cmd-hint">Type a command</span>
      <svg class="ms-auto me-1" width="7" height="4"><path d="M0 4h7L3.500 0z" fill="#222"/></svg>
    </div>

    <div class="watermark">render<span>.com.br</span></div>
  </div>

  <!-- status bar -->
  <div class="status-row d-flex">
    <div class="lay-tabs d-flex">
      <div class="lay-tab is-on wpx-44">Model</div>
      <div class="lay-tab wpx-50">Layout1</div>
      <div class="lay-tab wpx-52">Layout2</div>
      <div class="lay-tab lay-add wpx-17">+</div>
    </div>
    <div class="stat-seg seg-model">MODEL</div>
    <div class="stat-seg seg-grid">
      <svg width="12" height="12"><path d="M2 0v12M5 0v12M8 0v12M11 0v12M0 3h12M0 6h12M0 9h12" stroke="#2d7ce0"/></svg>
      <svg width="12" height="12"><path d="M1 1v10M4 1v10M7 1v10M10 1v10" stroke="#999" stroke-dasharray="1 2"/></svg>
      <span class="dd-caret"></span>
    </div>
    <div class="stat-seg seg-ortho">
      <svg width="12" height="12"><path d="M1 0v11h11M1 6c3 0 5 2 5 5" stroke="#2d7ce0" fill="none"/></svg>
      <svg width="13" height="13"><circle cx="6" cy="7" r="5" stroke="#ccc" fill="none"/><path d="M6 7h5" stroke="#ccc"/></svg>
      <span class="dd-caret"></span>
      <svg class="osnap" width="12" height="14"><path d="M1 0 11 14M8 2 3 12" stroke="#999"/></svg>
      <span class="dd-caret"></span>
    </div>
    <div class="stat-seg seg-angle">
      <svg width="14" height="13"><path d="M0 12 12 2M0 12h13M6 7c1 1 2 3 2 5" stroke="#2d7ce0" fill="none"/></svg>
      <svg width="14" height="14"><rect x="1.500" y="3.500" width="11" height="10" stroke="#2d7ce0" fill="none"/><rect x="0" y="0" width="4" height="4" fill="#3a9a4a"/></svg>
      <span class="dd-caret"></span>
    </div>
    <div class="stat-seg seg-anno">
      <svg width="15" height="14" viewBox="0 0 15 14"><path d="M7 2l1 6 6 5-6-2-7 3 4-6z" fill="#2d7ce0"/><circle cx="10" cy="3" r="2" stroke="#2d7ce0" fill="none"/></svg>
      <svg width="15" height="14" viewBox="0 0 15 14"><path d="M7 2l1 6 6 5-6-2-7 3 4-6z" fill="#c9c9c9"/></svg>
      <svg width="15" height="14" viewBox="0 0 15 14"><path d="M7 1l1 7 6 5-6-2-7 3 5-6z" fill="#c9c9c9"/></svg>
      <span>1:1</span><span class="dd-caret"></span>
    </div>
    <div class="stat-seg seg-gear">
      <svg width="13" height="13" viewBox="0 0 13 13"><circle cx="6.500" cy="6.500" r="4" fill="#ccc" stroke="#ccc" stroke-width="2" stroke-dasharray="2 1"/><circle cx="6.500" cy="6.500" r="1.500" fill="#555"/></svg>
      <span class="dd-caret"></span>
    </div>
    <div class="stat-seg seg-plus">
      <svg width="13" height="13"><path d="M6.500 0v13M0 6.500h13" stroke="#ddd"/></svg>
    </div>
    <div class="stat-seg seg-iso">
      <svg width="14" height="14"><rect x=".5" y=".5" width="5" height="5" stroke="#ccc" fill="none"/><circle cx="10" cy="6" r="3" stroke="#ccc" fill="none"/><path d="M4 8l3 5H1z" stroke="#ccc" fill="none"/></svg>
    </div>
    <div class="stat-seg seg-clock">
      <svg width="15" height="15"><circle cx="7.500" cy="7.500" r="6.500" stroke="#999" fill="none"/><path d="M5 5l4 4" stroke="#999"/></svg>
    </div>
    <div class="stat-seg seg-lock">
      <svg width="14" height="14"><rect x=".5" y="1.500" width="10" height="9" stroke="#ddd" fill="none"/><rect x="8" y="8" width="6" height="6" fill="#e8b32a"/></svg>
      <svg width="14" height="14"><rect x="1" y="1" width="9" height="9" fill="#7cb05a"/><rect x="7" y="8" width="7" height="6" fill="#e8b32a"/></svg>
    </div>
    <div class="stat-seg seg-full">
      <svg width="14" height="11"><rect x=".5" y=".5" width="13" height="10" stroke="#ddd" fill="none"/><path d="M3 8l3-3M8 3h3v3" stroke="#ddd" fill="none"/></svg>
    </div>
    <div class="stat-seg seg-menu">
      <svg width="14" height="11"><path d="M0 1h14M0 5.500h14M0 10h14" stroke="#ddd" stroke-width="1.500"/></svg>
    </div>
  </div>
  <div class="orange-line"></div>
</div>

<script src="https://cdn.jsdelivr.net/npm/bootstrap@5.3.3/dist/js/bootstrap.bundle.min.js"></script>
</body>
</html>
